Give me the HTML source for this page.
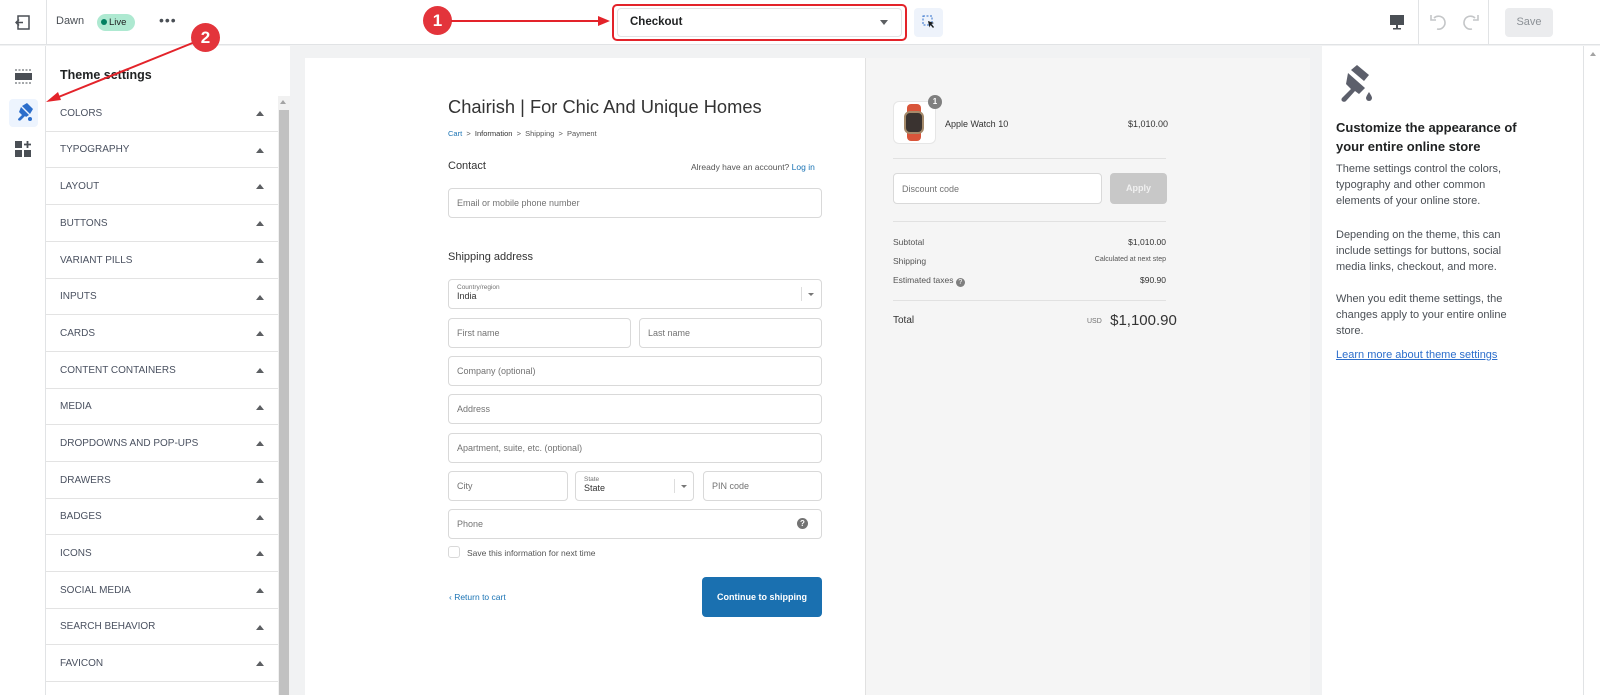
<!DOCTYPE html>
<html><head><meta charset="utf-8"><style>
*{box-sizing:border-box;margin:0;padding:0}
body{width:1600px;height:695px;overflow:hidden;font-family:"Liberation Sans",sans-serif;background:#f1f2f3;position:relative;color:#202223}
.a{position:absolute}
.t{position:absolute;white-space:nowrap}
.inp{position:absolute;background:#fff;border:1px solid #d9d9d9;border-radius:4px;font-size:9px;color:#737373;padding-left:8px;display:flex;align-items:center}
.item{position:absolute;left:46px;width:232px;height:37px;border-bottom:1px solid #e3e3e3;font-size:10px;color:#4a5160;padding-left:14px;display:flex;align-items:center}
.item:after{content:"";position:absolute;right:14px;top:16px;border-left:4px solid transparent;border-right:4px solid transparent;border-bottom:5px solid #5c5f62}
.row{position:absolute;left:893px;width:273px;font-size:8.5px;color:#545454;display:flex;justify-content:space-between}
.p{font-size:11px;line-height:16px;color:#4a4f55}
</style></head><body>
<div class="a" style="left:0;top:0;width:1600px;height:45px;background:#fff;border-bottom:1px solid #e1e3e5"></div>
<div class="a" style="left:46px;top:0;width:1px;height:45px;background:#e1e3e5"></div>
<svg class="a" style="left:15px;top:15px" width="16" height="15" viewBox="0 0 16 15"><rect x="3" y="1" width="11" height="13" fill="none" stroke="#4a4f55" stroke-width="1.5"/><rect x="0" y="5" width="3" height="5" fill="#fff"/><path d="M1 7.5h7M4 4.5l-3 3 3 3" stroke="#4a4f55" stroke-width="1.5" fill="none"/></svg>
<div class="t" style="left:56px;top:15px;font-size:11px;color:#4a4f55">Dawn</div>
<div class="a" style="left:97px;top:14px;width:38px;height:17px;border-radius:9px;background:#aee9d1"></div>
<div class="a" style="left:101px;top:19px;width:6px;height:6px;border-radius:50%;background:#008060"></div>
<div class="t" style="left:109px;top:17px;font-size:9.5px;color:#202223">Live</div>
<div class="t" style="left:159px;top:12px;font-size:14px;color:#4a4f55;letter-spacing:1px">•••</div>
<div class="a" style="left:612px;top:4px;width:295px;height:37px;border:2px solid #e3232a;border-radius:5px"></div>
<div class="a" style="left:617px;top:8px;width:285px;height:29px;border:1px solid #e1e3e5;border-radius:4px;background:#fff"></div>
<div class="t" style="left:630px;top:16px;font-size:11.5px;font-weight:bold;color:#202223">Checkout</div>
<div class="a" style="left:880px;top:20px;border-left:4px solid transparent;border-right:4px solid transparent;border-top:5px solid #5c5f62"></div>
<div class="a" style="left:914px;top:8px;width:29px;height:29px;border-radius:4px;background:#eef3fb"></div>
<svg class="a" style="left:922px;top:15px" width="14" height="14" viewBox="0 0 14 14"><rect x="1" y="1" width="9" height="9" fill="none" stroke="#2c6ecb" stroke-dasharray="2 1.5"/><path d="M6 6l6 2-2.5 1 2.5 3-1 1-2.5-3-1 2.5z" fill="#1a1c1d"/></svg>
<div class="a" style="left:423px;top:6px;width:29px;height:29px;border-radius:50%;background:#e3343b;color:#fff;font-weight:bold;font-size:17px;text-align:center;line-height:29px">1</div>
<div class="a" style="left:451px;top:20px;width:150px;height:2px;background:#e3232a"></div>
<div class="a" style="left:598px;top:16px;border-top:5px solid transparent;border-bottom:5px solid transparent;border-left:12px solid #e3232a"></div>
<svg class="a" style="left:1389px;top:14px" width="16" height="16" viewBox="0 0 16 16"><rect x="1" y="1" width="14" height="10" fill="#4a4f55"/><rect x="7" y="11" width="2" height="3" fill="#4a4f55"/><rect x="4" y="14" width="8" height="1.5" fill="#4a4f55"/></svg>
<div class="a" style="left:1418px;top:0;width:1px;height:45px;background:#e1e3e5"></div>
<div class="a" style="left:1488px;top:0;width:1px;height:45px;background:#e1e3e5"></div>
<svg class="a" style="left:1430px;top:13px" width="50" height="18" viewBox="0 0 50 18"><path d="M4 5a6.5 6.5 0 1 1 3 11" fill="none" stroke="#c4c6c8" stroke-width="1.6"/><path d="M1 2v5h5" fill="none" stroke="#c4c6c8" stroke-width="1.6"/><path d="M45 5a6.5 6.5 0 1 0 -3 11" fill="none" stroke="#c4c6c8" stroke-width="1.6"/><path d="M48 2v5h-5" fill="none" stroke="#c4c6c8" stroke-width="1.6"/></svg>
<div class="a" style="left:1505px;top:8px;width:48px;height:29px;border-radius:4px;background:#ebecee;color:#8c9196;font-size:11px;text-align:center;line-height:29px">Save</div>
<div class="a" style="left:0;top:46px;width:46px;height:649px;background:#fff;border-right:1px solid #e1e3e5"></div>
<svg class="a" style="left:15px;top:69px" width="17" height="15" viewBox="0 0 17 15"><path d="M0 1h17M0 14h17" stroke="#4a4f55" stroke-dasharray="2 1.5"/><rect x="0" y="4" width="17" height="7" fill="#4a4f55"/></svg>
<div class="a" style="left:9px;top:99px;width:29px;height:28px;border-radius:4px;background:#edf4fe"></div>
<svg class="a" style="left:14px;top:103px" width="19" height="19" viewBox="0 0 19 19"><path d="M8 3l5-3 6 6-3 5z" fill="#2c6ecb"/><path d="M7 4l8 8-3 2-1-1-4 4c-1 1-3 1-3-1l4-4-3-3z" fill="#2c6ecb"/><circle cx="16" cy="16" r="2" fill="#2c6ecb"/></svg>
<svg class="a" style="left:15px;top:141px" width="17" height="17" viewBox="0 0 17 17"><rect x="0" y="0" width="7" height="7" fill="#4a4f55"/><rect x="0" y="9" width="7" height="7" fill="#4a4f55"/><rect x="9" y="9" width="7" height="7" fill="#4a4f55"/><path d="M12.5 0v7M9 3.5h7" stroke="#4a4f55" stroke-width="1.8"/></svg>
<div class="a" style="left:46px;top:46px;width:244px;height:649px;background:#fff"></div>
<div class="t" style="left:60px;top:68px;font-size:12.5px;font-weight:bold;color:#202223">Theme settings</div>
<div class="a" style="left:278px;top:96px;width:12px;height:599px;background:#f1f1f1"></div>
<div class="a" style="left:279px;top:110px;width:10px;height:585px;background:#c1c1c1"></div>
<div class="a" style="left:280px;top:100px;border-left:3px solid transparent;border-right:3px solid transparent;border-bottom:4px solid #a3a3a3"></div>
<div class="item" style="top:95px;height:37px">COLORS</div>
<div class="item" style="top:132px;height:36px">TYPOGRAPHY</div>
<div class="item" style="top:168px;height:37px">LAYOUT</div>
<div class="item" style="top:205px;height:37px">BUTTONS</div>
<div class="item" style="top:242px;height:37px">VARIANT PILLS</div>
<div class="item" style="top:279px;height:36px">INPUTS</div>
<div class="item" style="top:315px;height:37px">CARDS</div>
<div class="item" style="top:352px;height:37px">CONTENT CONTAINERS</div>
<div class="item" style="top:389px;height:36px">MEDIA</div>
<div class="item" style="top:425px;height:37px">DROPDOWNS AND POP-UPS</div>
<div class="item" style="top:462px;height:37px">DRAWERS</div>
<div class="item" style="top:499px;height:36px">BADGES</div>
<div class="item" style="top:535px;height:37px">ICONS</div>
<div class="item" style="top:572px;height:37px">SOCIAL MEDIA</div>
<div class="item" style="top:609px;height:36px">SEARCH BEHAVIOR</div>
<div class="item" style="top:645px;height:37px">FAVICON</div>
<svg class="a" style="left:0;top:0" width="300" height="130"><path d="M195 42L56 98" stroke="#e3232a" stroke-width="2"/><path d="M46 102l12-10 3 8z" fill="#e3232a"/></svg>
<div class="a" style="left:191px;top:23px;width:29px;height:29px;border-radius:50%;background:#e3343b;color:#fff;font-weight:bold;font-size:17px;text-align:center;line-height:29px">2</div>
<div class="a" style="left:305px;top:58px;width:560px;height:637px;background:#fff"></div>
<div class="a" style="left:865px;top:58px;width:445px;height:637px;background:#f5f5f5;border-left:1px solid #e1e1e1"></div>
<div class="t" style="left:448px;top:96px;font-size:18.3px;color:#333">Chairish | For Chic And Unique Homes</div>
<div class="t" style="left:448px;top:129px;font-size:7.5px;color:#555"><span style="color:#1a73b4">Cart</span> &nbsp;&gt;&nbsp; <span style="color:#333">Information</span> &nbsp;&gt;&nbsp; Shipping &nbsp;&gt;&nbsp; Payment</div>
<div class="t" style="left:448px;top:160px;font-size:11px;color:#333">Contact</div>
<div class="t" style="left:691px;top:162px;font-size:8.5px;color:#555">Already have an account? <span style="color:#1a73b4">Log in</span></div>
<div class="inp" style="left:448px;top:188px;width:374px;height:30px">Email or mobile phone number</div>
<div class="t" style="left:448px;top:251px;font-size:11px;color:#333">Shipping address</div>
<div class="inp" style="left:448px;top:279px;width:374px;height:30px;display:block;padding-top:4px"><div style="font-size:6.5px">Country/region</div><div style="font-size:9px;color:#333">India</div></div>
<div class="a" style="left:801px;top:287px;width:1px;height:14px;background:#ddd"></div>
<div class="a" style="left:808px;top:293px;border-left:3px solid transparent;border-right:3px solid transparent;border-top:3px solid #777"></div>
<div class="inp" style="left:448px;top:318px;width:183px;height:30px">First name</div>
<div class="inp" style="left:639px;top:318px;width:183px;height:30px">Last name</div>
<div class="inp" style="left:448px;top:356px;width:374px;height:30px">Company (optional)</div>
<div class="inp" style="left:448px;top:394px;width:374px;height:30px">Address</div>
<div class="inp" style="left:448px;top:433px;width:374px;height:30px">Apartment, suite, etc. (optional)</div>
<div class="inp" style="left:448px;top:471px;width:120px;height:30px">City</div>
<div class="inp" style="left:575px;top:471px;width:119px;height:30px;display:block;padding-top:4px"><div style="font-size:6.5px">State</div><div style="font-size:9px;color:#333">State</div></div>
<div class="a" style="left:674px;top:479px;width:1px;height:14px;background:#ddd"></div>
<div class="a" style="left:681px;top:485px;border-left:3px solid transparent;border-right:3px solid transparent;border-top:3px solid #777"></div>
<div class="inp" style="left:703px;top:471px;width:119px;height:30px">PIN code</div>
<div class="inp" style="left:448px;top:509px;width:374px;height:30px">Phone</div>
<div class="a" style="left:797px;top:518px;width:11px;height:11px;border-radius:50%;background:#737373;color:#fff;font-size:8px;font-weight:bold;text-align:center;line-height:11px">?</div>
<div class="a" style="left:448px;top:546px;width:12px;height:12px;border:1px solid #d9d9d9;border-radius:3px;background:#fff"></div>
<div class="t" style="left:467px;top:548px;font-size:8.5px;color:#555">Save this information for next time</div>
<div class="t" style="left:449px;top:592px;font-size:8.5px;color:#1a73b4">‹ Return to cart</div>
<div class="a" style="left:702px;top:577px;width:120px;height:40px;border-radius:4px;background:#1a70b0;color:#fff;font-size:9px;font-weight:bold;text-align:center;line-height:40px">Continue to shipping</div>
<div class="a" style="left:893px;top:101px;width:43px;height:43px;border-radius:6px;background:#fff;border:1px solid #e6e6e6"></div>
<div class="a" style="left:907px;top:104px;width:14px;height:37px;border-radius:4px;background:#d9553a"></div>
<div class="a" style="left:904px;top:111px;width:20px;height:23px;border-radius:6px;background:#3a3330;border:2px solid #a58a6a"></div>
<div class="a" style="left:928px;top:95px;width:14px;height:14px;border-radius:50%;background:#7f7f7f;color:#fff;font-size:8px;font-weight:bold;text-align:center;line-height:14px">1</div>
<div class="t" style="left:945px;top:119px;font-size:9px;color:#333">Apple Watch 10</div>
<div class="t" style="left:1128px;top:119px;font-size:9px;color:#333">$1,010.00</div>
<div class="a" style="left:893px;top:158px;width:273px;height:1px;background:#e1e1e1"></div>
<div class="inp" style="left:893px;top:173px;width:209px;height:31px">Discount code</div>
<div class="a" style="left:1110px;top:173px;width:57px;height:31px;border-radius:4px;background:#c8c8c8;color:#f0f0f0;font-size:9px;font-weight:bold;text-align:center;line-height:31px">Apply</div>
<div class="a" style="left:893px;top:221px;width:273px;height:1px;background:#e1e1e1"></div>
<div class="row" style="top:237px"><span>Subtotal</span><span style="color:#333">$1,010.00</span></div>
<div class="row" style="top:256px"><span>Shipping</span><span style="font-size:7px">Calculated at next step</span></div>
<div class="row" style="top:275px"><span>Estimated taxes <span style="display:inline-block;width:9px;height:9px;border-radius:50%;background:#7f7f7f;color:#fff;font-size:7px;text-align:center;line-height:9px;vertical-align:-1px">?</span></span><span style="color:#333">$90.90</span></div>
<div class="a" style="left:893px;top:300px;width:273px;height:1px;background:#e1e1e1"></div>
<div class="t" style="left:893px;top:315px;font-size:10px;color:#333">Total</div>
<div class="t" style="left:1087px;top:312px;font-size:15px;color:#333"><span style="font-size:7px;color:#717171;vertical-align:2px">USD</span>&nbsp; $1,100.90</div>
<div class="a" style="left:1322px;top:46px;width:278px;height:649px;background:#fff"></div>
<div class="a" style="left:1583px;top:46px;width:1px;height:649px;background:#e1e3e5"></div>
<div class="a" style="left:1590px;top:52px;border-left:3px solid transparent;border-right:3px solid transparent;border-bottom:4px solid #a3a3a3"></div>
<svg class="a" style="left:1335px;top:64px" width="40" height="40" viewBox="0 0 40 40"><path d="M16 6l6-5 12 10-5 6z" fill="#5c5f6b"/><path d="M13 9l17 15-6 6-4-3-9 10c-2 2-6 0-4-3l9-9-5-5z" fill="#5c5f6b"/><path d="M34 28c2 3 3 5 3 6a3 3 0 0 1-6 0c0-1 1-3 3-6z" fill="#5c5f6b"/></svg>
<div class="t" style="left:1336px;top:118px;font-size:13px;line-height:19px;font-weight:bold;color:#202223">Customize the appearance of<br>your entire online store</div>
<div class="t p" style="left:1336px;top:161px">Theme settings control the colors,<br>typography and other common<br>elements of your online store.</div>
<div class="t p" style="left:1336px;top:227px">Depending on the theme, this can<br>include settings for buttons, social<br>media links, checkout, and more.</div>
<div class="t p" style="left:1336px;top:291px">When you edit theme settings, the<br>changes apply to your entire online<br>store.</div>
<div class="t p" style="left:1336px;top:347px;color:#2c6ecb;text-decoration:underline">Learn more about theme settings</div>
</body></html>
